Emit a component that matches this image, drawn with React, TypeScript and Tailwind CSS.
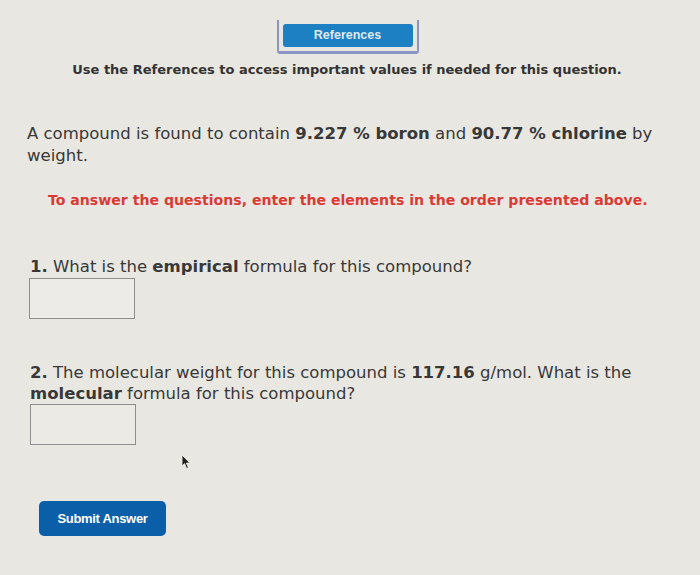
export default function App() {
  return (
    <div className="w-[700px] h-[575px] overflow-hidden bg-[#e9e7e1] text-[#383838] font-['DejaVu_Sans',Verdana,sans-serif]">
      {/* ===== References bar ===== */}
      <div className="flex justify-center pt-[20px] pr-[5px]">
        <div className="w-[142px] h-[34px] border-l-2 border-r-2 border-b-[3px] border-[#8d95c6] rounded-b-[3px] px-[4px] pt-[4px]">
          <div className="h-[23px] rounded-[3px] bg-[#1c80c2] flex items-center justify-center text-[12.5px] font-bold text-[#dfe9f3] font-['Liberation_Sans',Arial,sans-serif]">
            References
          </div>
        </div>
      </div>

      <p className="mt-[6px] text-center text-[13px] leading-[20px] font-bold text-[#333] pr-[6px]">
        Use the References to access important values if needed for this question.
      </p>

      {/* ===== Question body ===== */}
      <div className="pl-[27px] pr-[30px]">
        <p className="mt-[43px] text-[16.5px] leading-[22px]">
          A compound is found to contain <b>9.227 % boron</b> and <b>90.77 % chlorine</b> by weight.
        </p>

        <p className="mt-[23px] pl-[21px] text-[14.1px] leading-[20px] font-bold text-[#db3a34]">
          To answer the questions, enter the elements in the order presented above.
        </p>

        <p className="mt-[46px] pl-[3px] text-[16.5px] leading-[22px]">
          <b>1.</b> What is the <b>empirical</b> formula for this compound?
        </p>
        <div className="ml-[2px] w-[106px] h-[41px] border border-[#8e8e8e] bg-[#ecebe7]" />

        <p className="mt-[43px] pl-[3px] text-[16.5px] leading-[21px]">
          <b>2.</b> The molecular weight for this compound is <b>117.16</b> g/mol. What is the <b>molecular</b> formula for this compound?
        </p>
        <div className="ml-[3px] w-[106px] h-[41px] border border-[#8e8e8e] bg-[#ebeae5]" />

        <div className="mt-[9px] ml-[154px] h-[16px]">
          <svg width="10" height="16" viewBox="0 0 10 16">
            <path d="M1 1 L1 12 L3.6 9.6 L5.6 14.5 L7.4 13.7 L5.4 9 L9 9 Z" fill="#222" stroke="#f2f0ea" strokeWidth="0.8" />
          </svg>
        </div>

        <button className="mt-[31px] ml-[12px] w-[127px] h-[35px] rounded-[5px] bg-[#0b5ea8] text-white text-[13px] font-bold tracking-[-0.3px] font-['Liberation_Sans',Arial,sans-serif]">
          Submit Answer
        </button>
      </div>
    </div>
  )
}
